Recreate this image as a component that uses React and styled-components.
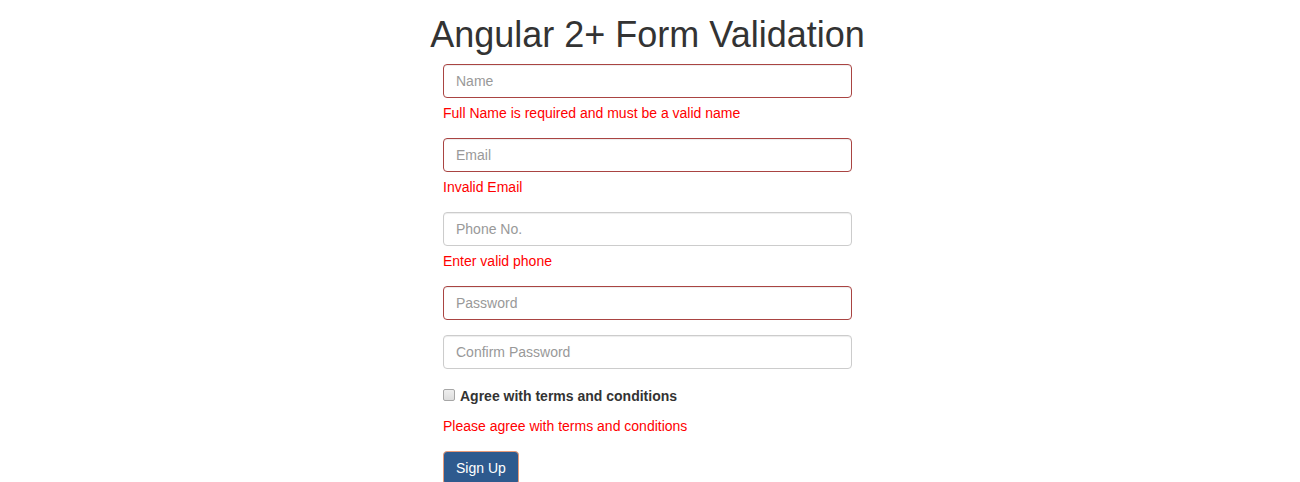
import React from "react";
import styled, { createGlobalStyle } from "styled-components";

const GlobalStyle = createGlobalStyle`
  body {
    margin: 0;
    background: #fff;
    color: #333;
    font-family: "Liberation Sans", Arial, sans-serif;
    font-size: 14px;
    line-height: 20px;
  }
`;

const Page = styled.div`
  display: flex;
  flex-direction: column;
  align-items: center;
  padding-right: 5px;
`;

const Title = styled.h1`
  font-size: 36px;
  font-weight: 500;
  line-height: 40px;
  margin: 15px 0 9px;
  color: #333;
`;

const Form = styled.form`
  width: 409px;
  display: flex;
  flex-direction: column;
`;

const Group = styled.div`
  margin-bottom: 15px;
`;

const Input = styled.input`
  box-sizing: border-box;
  display: block;
  width: 100%;
  height: 34px;
  padding: 6px 12px;
  font-family: inherit;
  font-size: 14px;
  color: #555;
  background: #fff;
  border: 1px solid ${(p) => (p.$error ? "#a94442" : "#ccc")};
  border-radius: 4px;
  box-shadow: inset 0 1px 1px rgba(0, 0, 0, 0.075);
  outline: none;

  &::placeholder {
    color: #999;
  }
`;

const ErrorText = styled.div`
  color: #f00;
  margin-top: ${(p) => p.$top || 5}px;
`;

const CheckRow = styled.label`
  display: flex;
  align-items: center;
  font-weight: bold;
  margin-top: 2px;
`;

const Check = styled.input`
  appearance: none;
  box-sizing: border-box;
  width: 12px;
  height: 12px;
  margin: -3px 5px 0 0;
  background: linear-gradient(#eee, #ddd);
  border: 1px solid #a6a6a6;
  border-radius: 2px;
`;

const Button = styled.button`
  align-self: flex-start;
  margin-top: 15px;
  padding: 6px 12px;
  font-family: inherit;
  font-size: 14px;
  line-height: 20px;
  color: #fff;
  background: #2e5a8e;
  border: 1px solid #e89a78;
  border-radius: 4px;
`;

const fields = [
  { ph: "Name", error: "Full Name is required and must be a valid name", red: true },
  { ph: "Email", error: "Invalid Email", red: true },
  { ph: "Phone No.", error: "Enter valid phone", red: false },
  { ph: "Password", red: true, type: "password" },
  { ph: "Confirm Password", red: false, type: "password" },
];

const App = () => (
  <Page>
    <GlobalStyle />
    <Title>Angular 2+ Form Validation</Title>
    <Form onSubmit={(e) => e.preventDefault()}>
      {fields.map((f) => (
        <Group key={f.ph}>
          <Input placeholder={f.ph} type={f.type || "text"} $error={f.red} />
          {f.error && <ErrorText>{f.error}</ErrorText>}
        </Group>
      ))}
      <CheckRow>
        <Check type="checkbox" />
        Agree with terms and conditions
      </CheckRow>
      <ErrorText $top={10}>Please agree with terms and conditions</ErrorText>
      <Button type="submit">Sign Up</Button>
    </Form>
  </Page>
);

export default App;
